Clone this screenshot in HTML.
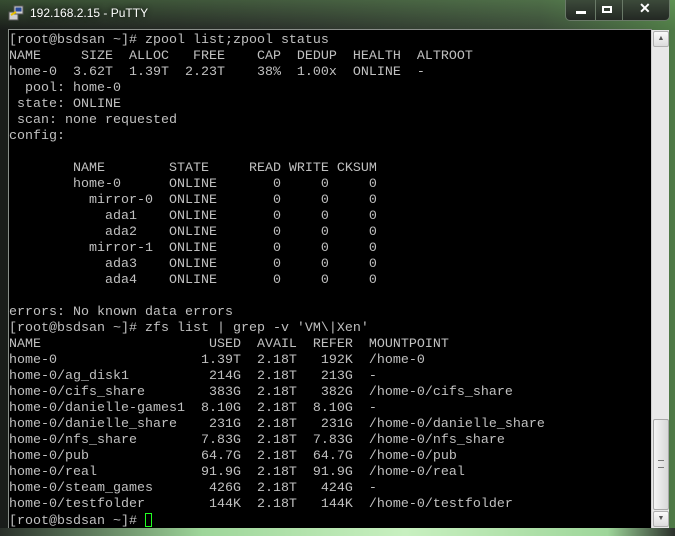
<!DOCTYPE html>
<html><head><style>
body{margin:0;width:675px;height:536px;overflow:hidden;background:#1c201c;position:relative;font-family:"Liberation Sans",sans-serif}
.frame{position:absolute;left:0;top:0;width:675px;height:536px;background:linear-gradient(90deg,#1a1d1a 0%,#2b302b 40%,#3a4a38 80%,#4f7a46 100%)}
.glow{position:absolute;left:0;top:0;width:675px;height:30px;background:linear-gradient(180deg,rgba(140,220,120,0.25),rgba(0,0,0,0));}
.title{position:absolute;left:30px;top:6px;font-size:12px;color:#fff;text-shadow:0 0 6px #000}
.icon{position:absolute;left:8px;top:5px;width:16px;height:16px}
.btns{position:absolute;left:565px;top:0;width:103px;height:20px;border:1px solid #6a7a68;border-top:none;border-radius:0 0 5px 5px;background:linear-gradient(#3c4a3a,#232823);}
.btns div{position:absolute;top:0;height:20px;border-right:1px solid #6a7a68}
.term{position:absolute;left:8px;top:29px;width:643px;height:499px;background:#000;border-top:1px solid #8a8f8a;border-left:1px solid #8a8f8a}
pre{margin:0;position:absolute;left:0px;top:3px;font-family:"Liberation Mono",monospace;font-size:13.33px;line-height:16px;color:#c0c0c0}
.cur{display:inline-block;width:7px;height:14px;border:1px solid #2f2;vertical-align:-3px;box-sizing:border-box}
.sb{position:absolute;left:651px;top:30px;width:17px;height:498px;background:#e8e8e8;border-left:1px solid #d0d0d0}
.thumb{position:absolute;left:1px;top:389px;width:14px;height:89px;background:linear-gradient(90deg,#f4f4f4,#d8d8d8);border:1px solid #a8a8a8;border-radius:2px}
.arr{position:absolute;left:1px;width:14px;height:14px;background:linear-gradient(#fafafa,#dcdcdc);border:1px solid #b0b0b0;border-radius:2px;font-size:7px;text-align:center;line-height:14px;color:#555}
.bot{position:absolute;left:0;top:528px;width:675px;height:8px;background:linear-gradient(90deg,#2a302a,#9ed69a 30%,#c8f0c0 60%,#9ed69a 90%,#2a302a)}
</style></head><body>
<div class="frame"></div><div class="glow"></div>
<svg class="icon" viewBox="0 0 16 16"><rect x="1" y="7" width="9" height="8" fill="#cfcfcf" stroke="#555"/><rect x="6" y="1" width="9" height="8" fill="#cfcfcf" stroke="#555"/><rect x="7.5" y="2.5" width="6" height="4" fill="#2a4a9a"/><path d="M3 10l5-3" stroke="#e8c000" stroke-width="2"/></svg>
<div class="title">192.168.2.15 - PuTTY</div>
<div class="btns"><div style="left:0;width:29px"></div><div style="left:29px;width:27px"></div>
<span style="position:absolute;left:10px;top:11px;width:10px;height:3px;background:#fff"></span>
<span style="position:absolute;left:36px;top:6px;width:10px;height:7px;border:2px solid #fff;box-sizing:border-box"></span>
<span style="position:absolute;left:73px;top:0px;color:#fff;font-size:14px;font-weight:bold">✕</span></div>
<div class="term"><pre>[root@bsdsan ~]# zpool list;zpool status
NAME     SIZE  ALLOC   FREE    CAP  DEDUP  HEALTH  ALTROOT
home-0  3.62T  1.39T  2.23T    38%  1.00x  ONLINE  -
  pool: home-0
 state: ONLINE
 scan: none requested
config:

        NAME        STATE     READ WRITE CKSUM
        home-0      ONLINE       0     0     0
          mirror-0  ONLINE       0     0     0
            ada1    ONLINE       0     0     0
            ada2    ONLINE       0     0     0
          mirror-1  ONLINE       0     0     0
            ada3    ONLINE       0     0     0
            ada4    ONLINE       0     0     0

errors: No known data errors
[root@bsdsan ~]# zfs list | grep -v 'VM\|Xen'
NAME                     USED  AVAIL  REFER  MOUNTPOINT
home-0                  1.39T  2.18T   192K  /home-0
home-0/ag_disk1          214G  2.18T   213G  -
home-0/cifs_share        383G  2.18T   382G  /home-0/cifs_share
home-0/danielle-games1  8.10G  2.18T  8.10G  -
home-0/danielle_share    231G  2.18T   231G  /home-0/danielle_share
home-0/nfs_share        7.83G  2.18T  7.83G  /home-0/nfs_share
home-0/pub              64.7G  2.18T  64.7G  /home-0/pub
home-0/real             91.9G  2.18T  91.9G  /home-0/real
home-0/steam_games       426G  2.18T   424G  -
home-0/testfolder        144K  2.18T   144K  /home-0/testfolder
[root@bsdsan ~]# <span class="cur"></span></pre></div>
<div class="sb"><div class="arr" style="top:1px">▲</div><div class="thumb"><div style="position:absolute;left:4px;top:40px;width:6px;height:6px;border-top:1px solid #777;border-bottom:1px solid #777"></div></div><div class="arr" style="top:481px">▼</div></div>
<div class="bot"></div>
</body></html>
